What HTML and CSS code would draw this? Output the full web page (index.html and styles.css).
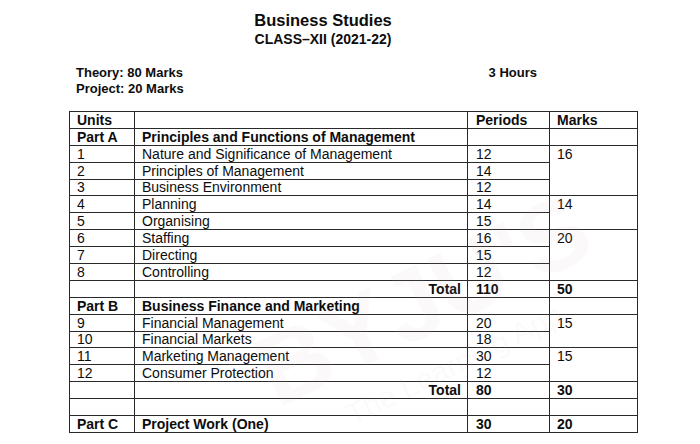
FILE: index.html
```html
<!DOCTYPE html>
<html>
<head>
<meta charset="utf-8">
<link rel="stylesheet" href="styles.css">
</head>
<body>
<div class="page">
  <div class="titles">
    <div class="title">Business Studies</div>
    <div class="subtitle">CLASS–XII (2021-22)</div>
  </div>
  <div class="info">
    <div class="info-left">
      <div>Theory: 80 Marks</div>
      <div>Project: 20 Marks</div>
    </div>
    <div class="info-right">3 Hours</div>
  </div>
  <table class="syllabus">
    <colgroup>
      <col class="c-unit"><col class="c-topic"><col class="c-per"><col class="c-marks">
    </colgroup>
    <tr class="b"><td>Units</td><td></td><td>Periods</td><td>Marks</td></tr>
    <tr class="b"><td>Part A</td><td>Principles and Functions of Management</td><td></td><td></td></tr>
    <tr><td>1</td><td>Nature and Significance of Management</td><td>12</td><td rowspan="3" class="top">16</td></tr>
    <tr><td>2</td><td>Principles of Management</td><td>14</td></tr>
    <tr><td>3</td><td>Business Environment</td><td>12</td></tr>
    <tr><td>4</td><td>Planning</td><td>14</td><td rowspan="2" class="top">14</td></tr>
    <tr><td>5</td><td>Organising</td><td>15</td></tr>
    <tr><td>6</td><td>Staffing</td><td>16</td><td rowspan="3" class="top">20</td></tr>
    <tr><td>7</td><td>Directing</td><td>15</td></tr>
    <tr><td>8</td><td>Controlling</td><td>12</td></tr>
    <tr class="b"><td></td><td class="total">Total</td><td>110</td><td>50</td></tr>
    <tr class="b"><td>Part B</td><td>Business Finance and Marketing</td><td></td><td></td></tr>
    <tr><td>9</td><td>Financial Management</td><td>20</td><td rowspan="2" class="top">15</td></tr>
    <tr><td>10</td><td>Financial Markets</td><td>18</td></tr>
    <tr><td>11</td><td>Marketing Management</td><td>30</td><td rowspan="2" class="top">15</td></tr>
    <tr><td>12</td><td>Consumer Protection</td><td>12</td></tr>
    <tr class="b"><td></td><td class="total">Total</td><td>80</td><td>30</td></tr>
    <tr><td></td><td></td><td></td><td></td></tr>
    <tr class="b"><td>Part C</td><td>Project Work (One)</td><td>30</td><td>20</td></tr>
  </table>
  <div class="watermark" aria-hidden="true">
    <span class="wm-big">BYJU'S</span>
    <span class="wm-small">The Learning App</span>
  </div>
</div>
</body>
</html>
```
FILE: styles.css
```css
html, body {
  margin: 0;
  padding: 0;
  background: #ffffff;
}
body {
  font-family: "Liberation Sans", Arial, sans-serif;
  color: #0d0d0d;
  width: 700px;
  height: 444px;
  overflow: hidden;
}
.page {
  position: relative;
  display: flex;
  flex-direction: column;
  padding-top: 10px;
  height: 434px;
  overflow: hidden;
}
.titles {
  width: 646px;
  text-align: center;
  font-weight: bold;
}
.title {
  font-size: 16.5px;
  line-height: 20px;
}
.subtitle {
  font-size: 14px;
  line-height: 18px;
}
.info {
  display: flex;
  justify-content: space-between;
  align-items: flex-start;
  margin-left: 76px;
  width: 461px;
  margin-top: 17px;
  font-weight: bold;
  font-size: 13px;
  line-height: 16px;
}
.syllabus {
  margin-left: 69px;
  margin-top: 14px;
  border-collapse: collapse;
  table-layout: fixed;
  width: 568px;
  font-size: 14px;
  position: relative;
  z-index: 1;
  flex-shrink: 0;
}
.c-unit { width: 65px; }
.c-topic { width: 333px; }
.c-per { width: 82px; }
.c-marks { width: 88px; }
.syllabus td {
  border: 1px solid #2a2a2a;
  height: 15.9px;
  line-height: 15px;
  padding: 0 6px 0 7px;
  vertical-align: bottom;
  white-space: nowrap;
  overflow: hidden;
}
.syllabus td.top {
  vertical-align: top;
  padding-top: 1px;
}
.syllabus tr.b td {
  font-weight: bold;
}
.syllabus td.total {
  text-align: right;
}
.syllabus td:nth-child(3) {
  padding-left: 8px;
}
.watermark {
  position: absolute;
  left: 230px;
  top: 240px;
  width: 420px;
  height: 190px;
  transform: rotate(-26deg);
  color: rgba(210, 170, 185, 0.07);
  font-family: "Liberation Sans", Arial, sans-serif;
  font-weight: bold;
  pointer-events: none;
  z-index: 2;
  display: flex;
  flex-direction: column;
  align-items: center;
  overflow: hidden;
}
.wm-big {
  font-size: 100px;
  line-height: 110px;
}
.wm-small {
  font-size: 30px;
  line-height: 36px;
  font-weight: normal;
}
```
